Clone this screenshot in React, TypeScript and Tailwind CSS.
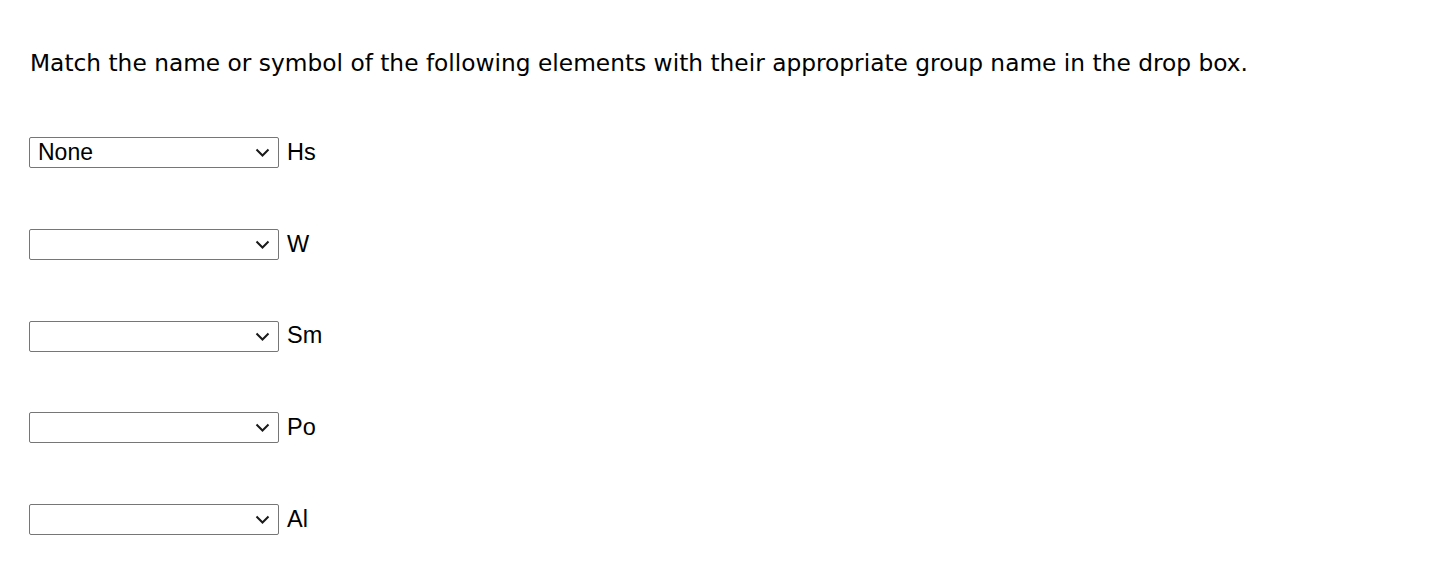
import { useState } from "react";

const items = [
  { symbol: "Hs", value: "None" },
  { symbol: "W", value: "" },
  { symbol: "Sm", value: "" },
  { symbol: "Po", value: "" },
  { symbol: "Al", value: "" },
];

const groups = ["", "None", "Alkali metals", "Alkaline earth metals", "Transition metals", "Lanthanides", "Actinides", "Post-transition metals", "Metalloids", "Halogens", "Noble gases"];

function GroupSelect({ initial }: { initial: string }) {
  const [value, setValue] = useState(initial);
  return (
    <div className="relative w-[250px] h-[31px]">
      <select
        value={value}
        onChange={(e) => setValue(e.target.value)}
        className="appearance-none w-full h-full border border-[#767676] rounded-[2px] bg-white pl-[8px] pr-[24px] text-[23px] leading-none text-black outline-none"
        style={{ fontFamily: '"Liberation Sans", Arial, sans-serif' }}
      >
        {groups.map((g) => (
          <option key={g} value={g}>
            {g}
          </option>
        ))}
      </select>
      <svg
        className="pointer-events-none absolute right-[9px] top-[11px]"
        width="15"
        height="9"
        viewBox="0 0 15 9"
        fill="none"
      >
        <path d="M1.5 1.5 L7.5 7.5 L13.5 1.5" stroke="#1a1a1a" strokeWidth="2" />
      </svg>
    </div>
  );
}

export default function App() {
  return (
    <div className="min-h-screen bg-white px-[30px] pt-[48px] text-black">
      <p
        className="text-[23.3px] leading-[30px] mb-[59px]"
        style={{ fontFamily: '"DejaVu Sans", Verdana, sans-serif' }}
      >
        Match the name or symbol of the following elements with their appropriate group name in the drop box.
      </p>
      <div className="flex flex-col gap-[60.75px] -ml-[1px]">
        {items.map((item) => (
          <div key={item.symbol} className="flex items-center gap-[8px] h-[31px]">
            <GroupSelect initial={item.value} />
            <span
              className="text-[23.5px] leading-none"
              style={{ fontFamily: '"Liberation Sans", Arial, sans-serif' }}
            >
              {item.symbol}
            </span>
          </div>
        ))}
      </div>
    </div>
  );
}
